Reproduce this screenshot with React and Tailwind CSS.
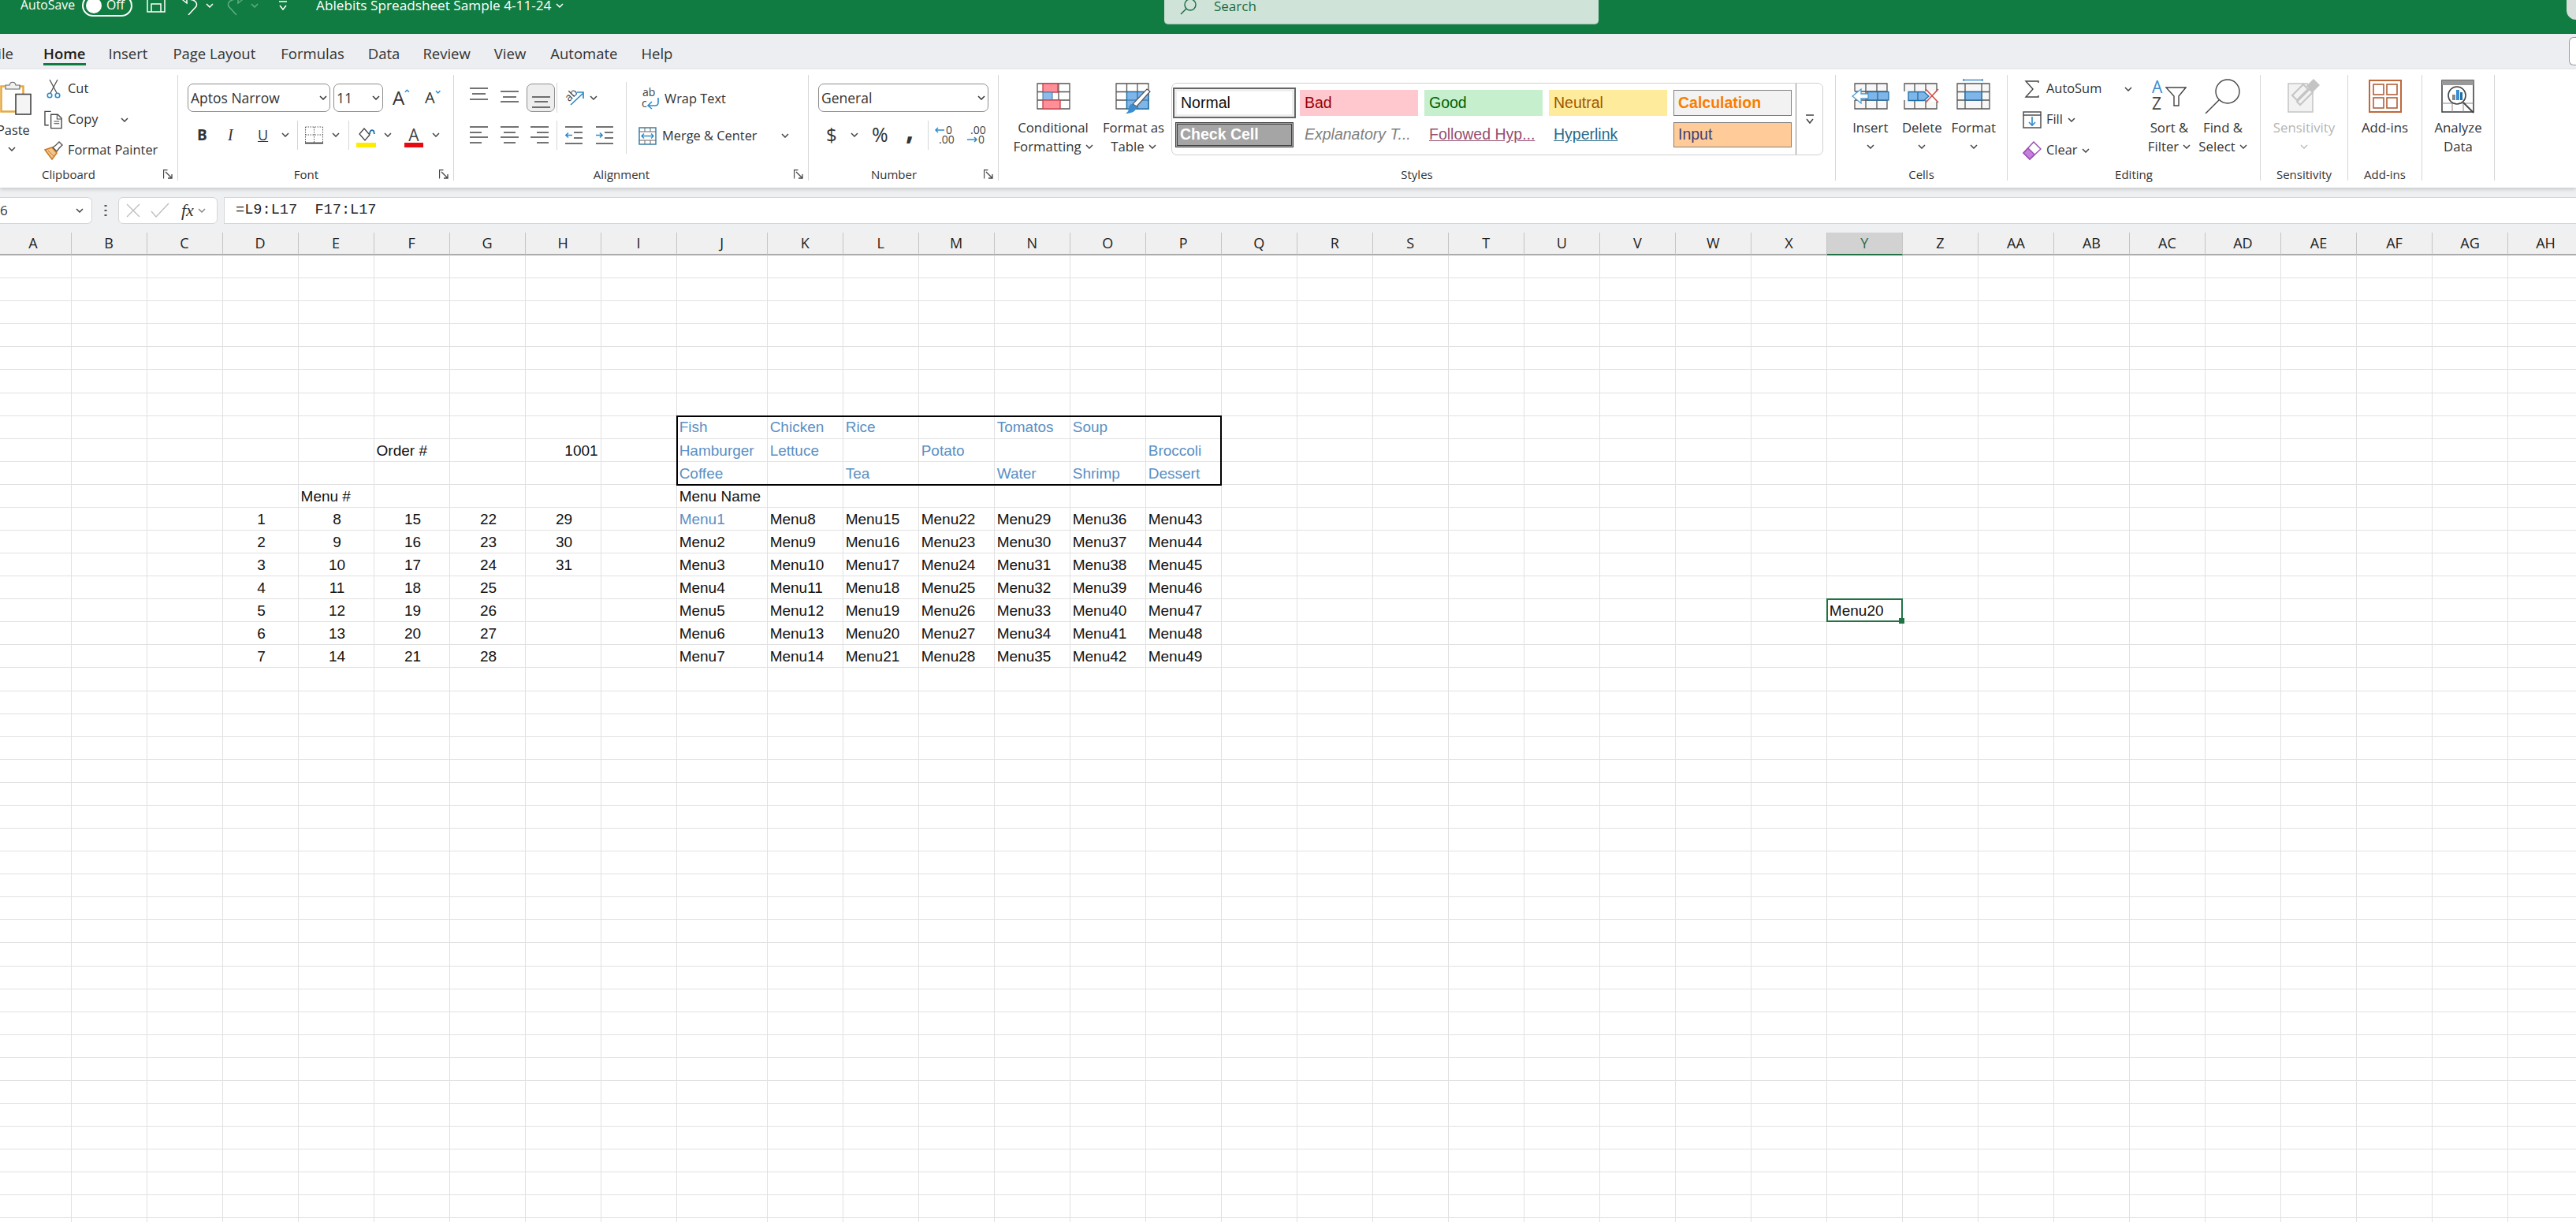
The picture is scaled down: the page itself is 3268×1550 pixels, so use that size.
import React from "react";

const COLS = "A B C D E F G H I J K L M N O P Q R S T U V W X Y Z AA AB AC AD AE AF AG AH".split(" ");
const ROW_COUNT = 43;

const BLUE = "text-[#5a8fc4]";
const cells = {
  F9: { text: "Order #" },
  H9: { text: "1001", className: "justify-end pr-[3px]" },
  J8: { text: "Fish", className: BLUE },
  K8: { text: "Chicken", className: BLUE },
  L8: { text: "Rice", className: BLUE },
  N8: { text: "Tomatos", className: BLUE },
  O8: { text: "Soup", className: BLUE },
  J9: { text: "Hamburger", className: BLUE },
  K9: { text: "Lettuce", className: BLUE },
  M9: { text: "Potato", className: BLUE },
  P9: { text: "Broccoli", className: BLUE },
  J10: { text: "Coffee", className: BLUE },
  L10: { text: "Tea", className: BLUE },
  N10: { text: "Water", className: BLUE },
  O10: { text: "Shrimp", className: BLUE },
  P10: { text: "Dessert", className: BLUE },
  E11: { text: "Menu #" },
  J11: { text: "Menu Name" },
  Y16: { text: "Menu20" },
};

["D", "E", "F", "G", "H"].forEach((col, c) => {
  for (let i = 0; i < 7; i++) {
    const value = c * 7 + i + 1;
    if (value <= 31) cells[col + (12 + i)] = { text: String(value), className: "justify-center" };
  }
});
["J", "K", "L", "M", "N", "O", "P"].forEach((col, c) => {
  for (let i = 0; i < 7; i++) {
    cells[col + (12 + i)] = { text: "Menu" + (c * 7 + i + 1), className: c === 0 && i === 0 ? BLUE : "" };
  }
});

function Chev({ className = "", color = "#444" }) {
  return (
    <svg width="10" height="6" viewBox="0 0 10 6" className={"shrink-0 " + className}>
      <path d="M1 1l4 4 4-4" fill="none" stroke={color} strokeWidth="1.5" />
    </svg>
  );
}

function Sep({ className = "" }) {
  return <div className={"w-px shrink-0 bg-[#d6d6d6] " + className} />;
}

function Launcher() {
  return (
    <svg width="12" height="12" viewBox="0 0 12 12" className="ml-auto mr-[6px] shrink-0">
      <path d="M.5 11.5V.5h5M.5 11.5h0M3 3l8 8M11 6v5H6" fill="none" stroke="#444" strokeWidth="1.3" />
    </svg>
  );
}

function Group({ width, label, launcher, children }) {
  return (
    <div className={"flex h-[134px] shrink-0 flex-col border-r border-[#d6d6d6] " + width}>
      <div className="h-[120px]">{children}</div>
      <div className="flex h-[16px] items-center text-[15px] text-[#333]">
        <span className="flex-1 whitespace-nowrap text-center">{label}</span>
        {launcher && <div className="flex w-[24px]"><Launcher /></div>}
      </div>
    </div>
  );
}

function LargeButton({ icon, lines, chev, tone = "text-[#333]", className = "", chevOnLine }) {
  return (
    <div className={"flex shrink-0 flex-col items-center text-[16.8px] " + tone + " " + className}>
      <div className="flex h-[55px] w-full justify-center">{icon}</div>
      {lines.map((line, i) => (
        <div key={line} className="flex h-[24px] items-center whitespace-nowrap">
          {line}
          {chevOnLine && i === lines.length - 1 && <Chev className="ml-[5px]" />}
        </div>
      ))}
      {chev && (
        <div className="flex h-[24px] items-center">
          <Chev color={chev} />
        </div>
      )}
    </div>
  );
}

const Line = ({ y, x1, x2 }) => <path d={`M${x1} ${y}H${x2}`} stroke="#444" strokeWidth="1.5" />;

function AlignIcon({ lines }) {
  return (
    <svg width="23" height="36" viewBox="0 0 23 36" className="shrink-0">
      {lines.map(([y, x1, x2]) => (
        <Line key={y} y={y} x1={x1} x2={x2} />
      ))}
    </svg>
  );
}

const PasteIcon = (
  <svg width="41" height="46" viewBox="0 0 41 46" className="mt-[7px] shrink-0">
    <path d="M6 7.5H1.5v32h28V7.5H25" fill="#fff" stroke="#e8a83c" strokeWidth="2.5" />
    <path d="M7 11V6h5c1-5 7-5 8 0h5v5z" fill="#f1f1f1" stroke="#666" strokeWidth="1.2" />
    <rect x="20" y="17.5" width="19" height="25.5" fill="#f5f5f5" stroke="#444" strokeWidth="1.6" />
  </svg>
);

const ScissorsIcon = (
  <svg width="18" height="24" viewBox="0 0 18 24">
    <path d="M4 0l9 17M14 0L5 17" fill="none" stroke="#555" strokeWidth="1.3" />
    <circle cx="4" cy="20" r="2.8" fill="none" stroke="#2e8bcb" strokeWidth="1.6" />
    <circle cx="14" cy="20" r="2.8" fill="none" stroke="#2e8bcb" strokeWidth="1.6" />
  </svg>
);

const CopyIcon = (
  <svg width="25" height="24" viewBox="0 0 25 24">
    <path d="M9 1H1v18h5" fill="none" stroke="#444" strokeWidth="1.4" />
    <path d="M9 5h9l5 5v13H9z" fill="#fff" stroke="#444" strokeWidth="1.4" />
    <path d="M17 5v6h6M13 14h7M13 17h7" fill="none" stroke="#444" strokeWidth="1.1" />
  </svg>
);

const PainterIcon = (
  <svg width="24" height="24" viewBox="0 0 24 24">
    <path d="M1 11l9-3 6 7-6 8z" fill="#f2c58c" stroke="#c97a22" strokeWidth="1.6" />
    <path d="M5 12l8 8" stroke="#c97a22" strokeWidth="1" />
    <path d="M11 8l4-3 4-4 4 4-4 4-3 4z" fill="#fff" stroke="#555" strokeWidth="1.4" />
  </svg>
);

const BorderIcon = (
  <svg width="23" height="23" viewBox="0 0 23 23">
    <path d="M.5 1h22M.5 1v20M22.5 1v20M11.5 1v20M.5 11h22" fill="none" stroke="#555" strokeWidth="1" strokeDasharray="1.5 1.5" />
    <path d="M0 21.5h23" stroke="#222" strokeWidth="1.6" />
  </svg>
);

const FillIcon = (
  <svg width="25" height="26" viewBox="0 0 25 26">
    <path d="M10 2l7 8-6 7-7-8z" fill="#fff" stroke="#444" strokeWidth="1.3" />
    <path d="M17 9c0-4 2-6 5-4l1 4" fill="none" stroke="#1c6fa8" strokeWidth="1.8" />
    <rect x="0" y="20" width="25" height="6" fill="#ffeb00" />
  </svg>
);

const FontColorIcon = (
  <div className="flex h-[26px] w-[24px] flex-col items-center">
    <span className="h-[20px] text-[21px] leading-[20px] text-[#444]">A</span>
    <div className="h-[6px] w-[24px] bg-[#e60b12]" />
  </div>
);

const OrientIcon = (
  <svg width="26" height="36" viewBox="0 0 26 36" className="shrink-0">
    <text x="10" y="19" textAnchor="middle" transform="rotate(-45 10 15)" fontSize="14" fill="#444" fontFamily="Open Sans">ab</text>
    <path d="M9 27L25 12M17 11h8v8" fill="none" stroke="#2e8bcb" strokeWidth="1.7" />
  </svg>
);

const WrapIcon = (
  <svg width="24" height="30" viewBox="0 0 24 30" className="shrink-0">
    <text x="1" y="12" fontSize="14" fill="#444" fontFamily="Open Sans">ab</text>
    <text x="0" y="26" fontSize="14" fill="#444" fontFamily="Open Sans">c</text>
    <path d="M21 14v6c0 3-2 4-4 4H9M13 19l-5 5 5 4" fill="none" stroke="#2e8bcb" strokeWidth="1.6" />
  </svg>
);

const MergeIcon = (
  <svg width="23" height="23" viewBox="0 0 23 23" className="shrink-0">
    <rect x="1" y="1" width="21" height="21" fill="#fff" stroke="#3b7ea8" strokeWidth="1.5" />
    <path d="M1 6h21M1 17h21M8 1v5M15 1v5M8 17v5M15 17v5" stroke="#666" strokeWidth="1" />
    <path d="M4 11.5h15M7 8.5l-3 3 3 3M16 8.5l3 3-3 3" fill="none" stroke="#2e8bcb" strokeWidth="1.4" />
  </svg>
);

const IndentIcon = ({ flip }) => (
  <svg width="22" height="23" viewBox="0 0 22 23" className="shrink-0">
    <path d="M0 1h22M11 8h11M11 15h11M0 22h22" stroke="#444" strokeWidth="1.5" />
    <path d={flip ? "M0 11.5h8M5 8.5l3 3-3 3" : "M1 11.5h8M4 8.5l-3 3 3 3"} fill="none" stroke="#2e8bcb" strokeWidth="1.6" />
  </svg>
);

const DecimalIcon = ({ less }) => (
  <svg width="25" height="24" viewBox="0 0 25 24" className="shrink-0">
    <text x={less ? 14 : 5} y="11" fontSize="14" fill="#444" fontFamily="Open Sans">{less ? "0" : ".00"}</text>
    <text x={less ? 5 : 15} y="23" fontSize="14" fill="#444" fontFamily="Open Sans">{less ? ".00" : "0"}</text>
    <path d={less ? "M1 6h11M4 3L1 6l3 3" : "M1 18h12M10 15l3 3-3 3"} fill="none" stroke="#2e8bcb" strokeWidth="1.5" />
  </svg>
);

const GridLines = () => (
  <path d="M1 1h41v32H1zM1 11.5h41M1 22h41M14.5 1v32M28 1v32" fill="none" stroke="#555" strokeWidth="1.3" />
);

const CondFormatIcon = (
  <svg width="43" height="35" viewBox="0 0 43 35" className="mt-[10px]">
    <GridLines />
    <rect x="8" y="1" width="19" height="11" fill="#ff8f98" stroke="#c9414a" strokeWidth="1.3" />
    <rect x="8" y="12" width="12" height="10" fill="#8dbcea" stroke="#3b7ea8" strokeWidth="1" />
    <rect x="8" y="22" width="22" height="11" fill="#ff8f98" stroke="#c9414a" strokeWidth="1.3" />
  </svg>
);

const TableIcon = (
  <svg width="46" height="42" viewBox="0 0 46 42" className="mt-[10px]">
    <GridLines />
    <rect x="14.5" y="11.5" width="27.5" height="21.5" fill="#7fb5e8" stroke="#1c6fa8" strokeWidth="1.3" />
    <path d="M14.5 22h27.5M28 11.5V33" stroke="#1c6fa8" strokeWidth="1.2" />
    <path d="M44 11L27 30l-5-3L40 8z" fill="#fff" stroke="#555" strokeWidth="1.2" />
    <path d="M21 27l6 4c-1 6-8 8-14 8 3-2 4-4 4-7 0-3 2-5 4-5z" fill="#3c8dcf" />
  </svg>
);

const InsertIcon = (
  <svg width="48" height="34" viewBox="0 0 48 34" className="mt-[10px]">
    <path d="M4 11V1h41v32H4V22M18 1v32M32 1v32M4 11h41M4 22h41" fill="#f7f7f7" stroke="#555" strokeWidth="1.3" />
    <rect x="20" y="11.5" width="27" height="10.5" fill="#7fb5e8" stroke="#1c6fa8" strokeWidth="1.3" />
    <path d="M33 11.5V22" stroke="#1c6fa8" strokeWidth="1.3" />
    <path d="M21 14h-9v-6L1 17l11 9v-6h9z" fill="#fff" stroke="#4a9bd4" strokeWidth="1.3" />
  </svg>
);

const DeleteIcon = (
  <svg width="46" height="34" viewBox="0 0 46 34" className="mt-[10px]">
    <path d="M1 11V1h41v10M1 22v11h41V24M14 1v10M28 1v10M14 22v11M28 22v11" fill="#f7f7f7" stroke="#555" strokeWidth="1.3" />
    <path d="M6 11.5h20l6 5.5-6 5.5H6z" fill="#7fb5e8" stroke="#1c6fa8" strokeWidth="1.3" />
    <path d="M18 11.5v11" stroke="#1c6fa8" strokeWidth="1.3" />
    <path d="M28 8l16 17M44 8L28 25" stroke="#d04f4f" strokeWidth="1.7" />
  </svg>
);

const FormatCellsIcon = (
  <svg width="43" height="41" viewBox="0 0 43 41" className="mt-[3px]">
    <path d="M9 2v3M33 2v3M9 3.5h24" fill="none" stroke="#3c8dcf" strokeWidth="1.4" />
    <g transform="translate(0 7)">
      <path d="M1 1h41v32H1zM1 11.5h41M1 22h41M11 1v32M32 1v32" fill="#f7f7f7" stroke="#555" strokeWidth="1.3" />
      <rect x="11" y="11.5" width="21" height="10.5" fill="#7fb5e8" stroke="#1c6fa8" strokeWidth="1.3" />
    </g>
  </svg>
);

const SumIcon = (
  <svg width="20" height="22" viewBox="0 0 20 22">
    <path d="M18 3V1H2l9 10-9 10h16v-2" fill="none" stroke="#444" strokeWidth="1.4" />
  </svg>
);

const DownFillIcon = (
  <svg width="24" height="22" viewBox="0 0 24 22">
    <rect x="1" y="1" width="22" height="20" fill="#fff" stroke="#444" strokeWidth="1.4" />
    <path d="M1 5h22" stroke="#444" strokeWidth="1.4" />
    <path d="M12 7v11M8 14l4 4 4-4" fill="none" stroke="#2e8bcb" strokeWidth="1.6" />
  </svg>
);

const EraserIcon = (
  <svg width="24" height="24" viewBox="0 0 24 24">
    <path d="M14 1l9 9-14 13-8-8z" fill="#fff" stroke="#9c4fb3" strokeWidth="1.5" />
    <path d="M7 9l8 8-6 6-8-8z" fill="#c77fdc" stroke="#9c4fb3" strokeWidth="1.5" />
  </svg>
);

const SortIcon = (
  <svg width="44" height="41" viewBox="0 0 44 41" className="mt-[6px]">
    <text x="0" y="17" fontSize="21" fill="#3c8dcf" fontFamily="Open Sans">A</text>
    <text x="0" y="38" fontSize="21" fill="#444" fontFamily="Open Sans">Z</text>
    <path d="M18 10h25L34 21v12h-6V21z" fill="#fff" stroke="#444" strokeWidth="1.4" />
  </svg>
);

const FindIcon = (
  <svg width="46" height="44" viewBox="0 0 46 44" className="mt-[5px]">
    <circle cx="29" cy="16" r="15" fill="#fff" stroke="#444" strokeWidth="1.4" />
    <path d="M18 27L1 44" stroke="#444" strokeWidth="1.4" />
  </svg>
);

const SensitivityIcon = (
  <svg width="42" height="44" viewBox="0 0 42 44" className="mt-[4px]">
    <path d="M1 7h24l7 8v28H1z" fill="#f2f2f2" stroke="#c4c4c4" strokeWidth="1.5" />
    <path d="M6 22L20 8l6 6-14 14zM12 30l16-16 4 4-16 16z" fill="#f2f2f2" stroke="#c4c4c4" strokeWidth="2" />
    <path d="M24 10l9-9 8 8-9 9z" fill="#c4c4c4" />
  </svg>
);

const AddInsIcon = (
  <svg width="42" height="42" viewBox="0 0 42 42" className="mt-[6px]">
    <rect x="1" y="1" width="40" height="40" fill="#fff" stroke="#c0683a" strokeWidth="2" />
    <rect x="6" y="6" width="13" height="13" fill="#fff" stroke="#b0603a" strokeWidth="1.6" />
    <rect x="23" y="6" width="13" height="13" fill="#fff" stroke="#b0603a" strokeWidth="1.6" />
    <rect x="6" y="23" width="13" height="13" fill="#fff" stroke="#b0603a" strokeWidth="1.6" />
    <rect x="23" y="23" width="13" height="13" fill="#fff" stroke="#b0603a" strokeWidth="1.6" />
  </svg>
);

const AnalyzeIcon = (
  <svg width="43" height="43" viewBox="0 0 43 43" className="mt-[6px]">
    <rect x="1" y="1" width="40" height="40" fill="#fff" stroke="#444" strokeWidth="1.6" />
    <rect x="1" y="1" width="40" height="6" fill="#999" />
    <path d="M1 30h40M14 30v11M28 30v11" stroke="#888" strokeWidth="1" />
    <circle cx="20" cy="20" r="11" fill="#fff" stroke="#444" strokeWidth="1.6" />
    <rect x="14" y="19" width="4" height="7" fill="#888" />
    <rect x="19" y="13" width="4" height="13" fill="#3c8dcf" />
    <rect x="24" y="16" width="3" height="10" fill="#1c6fa8" />
    <path d="M28 29l13 13" stroke="#444" strokeWidth="1.8" />
  </svg>
);

function SmallRow({ icon, iconWidth = "w-[24px]", children }) {
  return (
    <div className="flex h-[39px] items-center whitespace-nowrap text-[16.4px] text-[#333]">
      <div className={"flex shrink-0 justify-center " + iconWidth}>{icon}</div>
      {children}
    </div>
  );
}

function SelectBox({ width, text }) {
  return (
    <div className={"flex h-[36px] shrink-0 items-center rounded-[7px] border border-[#8f8f8f] pl-[3px] text-[17.5px] text-[#333] " + width}>
      <span>{text}</span>
      <Chev className="ml-auto mr-[3px]" color="#333" />
    </div>
  );
}

function StyleCell({ className, children }) {
  return <div className={"flex items-center whitespace-nowrap font-['Liberation_Sans'] text-[19.5px] " + className}>{children}</div>;
}

function TitleBar() {
  return (
    <div className="flex h-[43px] items-start overflow-hidden bg-[#107c41] text-white">
      <div className="flex h-[14px] w-[1477px] shrink-0 items-center">
        <span className="ml-[26px] text-[15.8px]">AutoSave</span>
        <div className="ml-[9px] flex h-[28px] w-[64px] items-center rounded-full border-2 border-white pl-[3px]">
          <div className="h-[20px] w-[20px] rounded-full bg-white" />
          <span className="ml-[6px] text-[15.8px]">Off</span>
        </div>
        <svg width="24" height="28" viewBox="0 0 24 28" className="ml-[18px] mt-[-6px]">
          <path d="M1 0v25h22V0M6 25V15h12v10M6 0v7h12V0" fill="none" stroke="#fff" strokeWidth="1.5" />
        </svg>
        <svg width="22" height="24" viewBox="0 0 22 24" className="ml-[20px]">
          <path d="M2 5l5 4V2zM7 4c10 0 14 4 12 9L9 24" fill="none" stroke="#fff" strokeWidth="1.5" />
        </svg>
        <Chev className="ml-[9px]" color="#fff" />
        <svg width="22" height="24" viewBox="0 0 22 24" className="ml-[16px]">
          <path d="M20 5l-5 4V2zM15 4C5 4 1 8 3 13l10 11" fill="none" stroke="#5fae85" strokeWidth="1.5" />
        </svg>
        <Chev className="ml-[9px]" color="#5fae85" />
        <svg width="12" height="14" viewBox="0 0 12 14" className="ml-[25px]">
          <path d="M1 2h10M2 7l4 5 4-5" fill="none" stroke="#fff" strokeWidth="1.5" />
        </svg>
        <span className="ml-[36px] whitespace-nowrap text-[17.2px]">Ablebits Spreadsheet Sample 4-11-24</span>
        <Chev className="ml-[6px]" color="#fff" />
      </div>
      <div className="flex h-[31px] w-[551px] shrink-0 items-start rounded-b-[5px] border-b border-[#9dbfad] bg-[#cfe3d8] text-[#1d6b43]">
        <svg width="22" height="22" viewBox="0 0 22 22" className="ml-[20px] mt-[-3px]">
          <circle cx="13" cy="9" r="7" fill="none" stroke="#1d6b43" strokeWidth="1.4" />
          <path d="M8 14l-7 7" stroke="#1d6b43" strokeWidth="1.4" />
        </svg>
        <span className="ml-[21px] text-[17px] leading-[16px]">Search</span>
      </div>
      <div className="ml-auto h-[25px] w-[12px] rounded-bl-full bg-[#d9dfdc]" />
    </div>
  );
}

function Tabs() {
  const tabs = [
    ["Insert", "ml-[29px]"],
    ["Page Layout", "ml-[32px]"],
    ["Formulas", "ml-[32px]"],
    ["Data", "ml-[30px]"],
    ["Review", "ml-[29px]"],
    ["View", "ml-[30px]"],
    ["Automate", "ml-[31px]"],
    ["Help", "ml-[30px]"],
  ];
  return (
    <div className="flex h-[45px] items-start bg-[#eceef1] text-[18.5px] text-[#333]">
      <span className="flex h-[40px] w-[17px] shrink-0 justify-end pt-[10px] leading-[30px]">File</span>
      <span className="ml-[38px] h-[40px] border-b-[3px] border-[#107c41] pt-[10px] font-semibold leading-[30px] text-[#1d1d1d]">Home</span>
      {tabs.map(([name, margin]) => (
        <span key={name} className={"h-[40px] pt-[10px] leading-[30px] " + margin}>{name}</span>
      ))}
      <div className="ml-auto mt-[4px] h-[36px] w-[9px] rounded-l-[6px] border border-r-0 border-[#9a9a9a] bg-white" />
    </div>
  );
}

function Ribbon() {
  return (
    <div className="relative z-10 flex h-[150px] items-start bg-white pt-[7px] text-[#333] shadow-[0_2px_5px_rgba(0,0,0,0.18)]">
      <div className="flex h-[134px] w-[226px] shrink-0 flex-col border-r border-[#d6d6d6]">
        <div className="flex h-[120px]">
          <div className="flex w-[56px] shrink-0 flex-col text-[16.4px]">
            {PasteIcon}
            <span className="ml-[-4px] mt-[6px] leading-[22px]">Paste</span>
            <Chev className="ml-[10px] mt-[10px]" />
          </div>
          <div className="mt-[-2px] flex flex-col">
            <SmallRow icon={ScissorsIcon}><span className="ml-[6px]">Cut</span></SmallRow>
            <SmallRow icon={CopyIcon}><span className="ml-[6px] w-[67px]">Copy</span><Chev /></SmallRow>
            <SmallRow icon={PainterIcon}><span className="ml-[6px]">Format Painter</span></SmallRow>
          </div>
        </div>
        <div className="flex h-[16px] items-center text-[15px]">
          <span className="ml-[53px]">Clipboard</span>
          <Launcher />
        </div>
      </div>

      <Group width="w-[350px]" label="Font" launcher>
        <div className="flex items-center pl-[12px] pt-[11px]">
          <SelectBox width="w-[181px]" text="Aptos Narrow" />
          <div className="ml-[4px]"><SelectBox width="w-[63px]" text="11" /></div>
          <span className="ml-[12px] flex w-[22px] text-[24px] leading-none">A<svg width="8" height="6" viewBox="0 0 8 6"><path d="M1 5l3-3 3 3" fill="none" stroke="#2e8bcb" strokeWidth="1.6" /></svg></span>
          <span className="ml-[19px] flex w-[20px] text-[20px] leading-none">A<svg width="8" height="6" viewBox="0 0 8 6"><path d="M1 1l3 3 3-3" fill="none" stroke="#2e8bcb" strokeWidth="1.6" /></svg></span>
        </div>
        <div className="mt-[9px] flex h-[40px] items-center">
          <span className="ml-[24px] w-[12px] text-[19px] font-bold">B</span>
          <span className="ml-[27px] w-[12px] font-['Liberation_Serif'] text-[20px] italic">I</span>
          <span className="ml-[26px] w-[14px] text-[18px] underline">U</span>
          <Chev className="ml-[16px]" />
          <Sep className="ml-[10px] h-[37px]" />
          <div className="ml-[9px] w-[23px]">{BorderIcon}</div>
          <Chev className="ml-[11px]" />
          <Sep className="ml-[11px] h-[37px]" />
          <div className="ml-[9px] mt-[6px] w-[25px]">{FillIcon}</div>
          <Chev className="ml-[10px]" />
          <div className="ml-[16px] mt-[6px]">{FontColorIcon}</div>
          <Chev className="ml-[11px]" />
        </div>
      </Group>

      <Group width="w-[450px]" label="Alignment" launcher>
        <div className="flex items-start">
          <div className="w-[218px] shrink-0 pt-[11px]">
            <div className="flex h-[36px] items-center">
              <div className="ml-[20px]"><AlignIcon lines={[[6, 0, 23], [13, 3, 20], [20, 0, 23]]} /></div>
              <div className="ml-[16px]"><AlignIcon lines={[[10, 0, 23], [17, 3, 20], [23, 0, 23]]} /></div>
              <div className="ml-[10px] flex h-[36px] w-[36px] justify-center rounded-[7px] border border-[#8f8f8f] bg-[#eeeeee]">
                <AlignIcon lines={[[16, 0, 23], [22, 3, 20], [29, 0, 23]]} />
              </div>
              <Sep className="ml-[2px] h-[38px]" />
              <div className="ml-[8px]">{OrientIcon}</div>
              <Chev className="ml-[7px]" />
            </div>
            <div className="mt-[9px] flex h-[40px] items-center">
              <div className="ml-[20px]"><AlignIcon lines={[[8, 0, 23], [15, 0, 15], [21, 0, 23], [28, 0, 15]]} /></div>
              <div className="ml-[16px]"><AlignIcon lines={[[8, 0, 23], [15, 4, 19], [21, 0, 23], [28, 4, 19]]} /></div>
              <div className="ml-[15px]"><AlignIcon lines={[[8, 0, 23], [15, 8, 23], [21, 0, 23], [28, 8, 23]]} /></div>
              <Sep className="ml-[10px] h-[37px]" />
              <div className="ml-[10px]"><IndentIcon /></div>
              <div className="ml-[17px]"><IndentIcon flip /></div>
            </div>
          </div>
          <Sep className="mt-[9px] h-[91px]" />
          <div className="flex flex-col pt-[12px] text-[16.4px]">
            <div className="flex h-[36px] items-center whitespace-nowrap">
              <div className="ml-[19px]">{WrapIcon}</div>
              <span className="ml-[5px]">Wrap Text</span>
            </div>
            <div className="mt-[9px] flex h-[40px] items-center whitespace-nowrap">
              <div className="ml-[15px]">{MergeIcon}</div>
              <span className="ml-[7px] w-[151px]">Merge &amp; Center</span>
              <Chev />
            </div>
          </div>
        </div>
      </Group>

      <Group width="w-[241px]" label="Number" launcher>
        <div className="pl-[12px] pt-[11px]">
          <SelectBox width="w-[216px]" text="General" />
        </div>
        <div className="mt-[9px] flex h-[40px] items-center">
          <span className="ml-[22px] w-[12px] text-[24px]">$</span>
          <Chev className="ml-[19px]" />
          <span className="ml-[17px] w-[22px] text-[25px]">%</span>
          <span className="ml-[21px] h-[32px] w-[14px] text-[36px] font-bold leading-[18px]">,</span>
          <Sep className="ml-[14px] h-[37px]" />
          <div className="ml-[8px]"><DecimalIcon less /></div>
          <div className="ml-[15px]"><DecimalIcon /></div>
        </div>
      </Group>

      <Group width="w-[1062px]" label="Styles">
        <div className="flex items-start">
          <LargeButton className="w-[138px]" icon={CondFormatIcon} lines={["Conditional", "Formatting"]} chevOnLine />
          <LargeButton className="w-[66px]" icon={TableIcon} lines={["Format as", "Table"]} chevOnLine />
          <div className="ml-[15px] mt-[10px] flex h-[92px] w-[827px] rounded-[7px] border border-[#d0d0d0]">
            <div className="grid grid-cols-[repeat(5,150px)] grid-rows-[33px_32px] gap-x-[8px] gap-y-[8px] pl-[4px] pt-[8px]">
              <StyleCell className="m-[-3px] border-2 border-[#666] bg-white pl-[8px] text-[#111] shadow-[inset_0_0_0_3px_#eeeeee]">Normal</StyleCell>
              <StyleCell className="bg-[#ffc7ce] px-[6px] text-[#9c0006]">Bad</StyleCell>
              <StyleCell className="bg-[#c6efce] px-[6px] text-[#006100]">Good</StyleCell>
              <StyleCell className="bg-[#ffeb9c] px-[6px] text-[#9c5700]">Neutral</StyleCell>
              <StyleCell className="border border-[#7f7f7f] bg-[#f2f2f2] px-[5px] font-bold text-[#fa7d00]">Calculation</StyleCell>
              <StyleCell className="border-[3px] border-double border-[#3f3f3f] bg-[#a5a5a5] px-[3px] font-bold text-white">Check Cell</StyleCell>
              <StyleCell className="px-[6px] italic text-[#7f7f7f]">Explanatory T...</StyleCell>
              <StyleCell className="px-[6px] text-[#954f72] underline">Followed Hyp...</StyleCell>
              <StyleCell className="px-[6px] text-[#2a6a8a] underline">Hyperlink</StyleCell>
              <StyleCell className="border border-[#7f7f7f] bg-[#ffcc99] px-[5px] text-[#3f3f76]">Input</StyleCell>
            </div>
            <div className="ml-[5px] flex flex-1 items-center justify-center rounded-r-[7px] border-l border-[#8a8a8a]">
              <svg width="12" height="14" viewBox="0 0 12 14">
                <path d="M1 2h10M2 7l4 5 4-5" fill="none" stroke="#444" strokeWidth="1.5" />
              </svg>
            </div>
          </div>
        </div>
      </Group>

      <Group width="w-[218px]" label="Cells">
        <div className="ml-[11px] flex">
          <LargeButton className="w-[65.5px]" icon={InsertIcon} lines={["Insert"]} chev="#444" />
          <LargeButton className="w-[65.5px]" icon={DeleteIcon} lines={["Delete"]} chev="#444" />
          <LargeButton className="w-[65.5px]" icon={FormatCellsIcon} lines={["Format"]} chev="#444" />
        </div>
      </Group>

      <Group width="w-[321px]" label="Editing">
        <div className="ml-[19px] flex">
          <div className="mt-[-2px] flex w-[152px] shrink-0 flex-col">
            <SmallRow icon={SumIcon}><span className="ml-[6px] w-[99px]">AutoSum</span><Chev /></SmallRow>
            <SmallRow icon={DownFillIcon}><span className="ml-[6px]">Fill</span><Chev className="ml-[6px]" /></SmallRow>
            <SmallRow icon={EraserIcon}><span className="ml-[6px]">Clear</span><Chev className="ml-[6px]" /></SmallRow>
          </div>
          <LargeButton className="w-[68px]" icon={SortIcon} lines={["Sort &", "Filter"]} chevOnLine />
          <LargeButton className="w-[68px]" icon={FindIcon} lines={["Find &", "Select"]} chevOnLine />
        </div>
      </Group>

      <Group width="w-[111px]" label="Sensitivity">
        <LargeButton icon={SensitivityIcon} lines={["Sensitivity"]} chev="#bdbdbd" tone="text-[#b5b5b5]" />
      </Group>

      <Group width="w-[94px]" label="Add-ins">
        <LargeButton icon={AddInsIcon} lines={["Add-ins"]} />
      </Group>

      <Group width="w-[92px]" label="">
        <LargeButton icon={AnalyzeIcon} lines={["Analyze", "Data"]} />
      </Group>
    </div>
  );
}

function FormulaBar() {
  return (
    <div className="flex h-[57px] flex-col bg-[#eef0f2] pt-[12px]">
      <div className="flex h-[34px] items-stretch">
        <div className="flex w-[117px] items-center rounded-r-[6px] border border-l-0 border-[#d6d6d6] bg-white text-[17px] text-[#333]">
          <span>6</span>
          <Chev className="ml-auto mr-[10px]" color="#444" />
        </div>
        <div className="flex w-[33px] items-center justify-center">
          <svg width="4" height="16" viewBox="0 0 4 16"><path d="M2 1v2M2 7v2M2 13v2" stroke="#555" strokeWidth="3" /></svg>
        </div>
        <div className="flex w-[126px] items-center rounded-[6px] border border-[#d6d6d6] bg-white">
          <svg width="20" height="20" viewBox="0 0 20 20" className="ml-[8px]"><path d="M2 2l16 16M18 2L2 18" stroke="#bdbdbd" strokeWidth="1.3" /></svg>
          <svg width="24" height="20" viewBox="0 0 24 20" className="ml-[12px]"><path d="M1 11l6 7L23 1" fill="none" stroke="#bdbdbd" strokeWidth="1.3" /></svg>
          <span className="ml-[15px] font-['Liberation_Serif'] text-[22px] italic leading-none text-[#333]">fx</span>
          <Chev className="ml-[5px]" color="#888" />
        </div>
        <div className="ml-[8px] flex flex-1 items-center border-y border-l border-[#d6d6d6] bg-white pl-[14px] font-['Liberation_Mono'] text-[18.6px] text-[#222]">
          <span className="whitespace-pre">=L9:L17  F17:L17</span>
        </div>
      </div>
    </div>
  );
}

function Sheet() {
  const rows = Array.from({ length: ROW_COUNT }, (_, i) => i + 1);
  return (
    <div className="ml-[-5.5px] grid w-max grid-cols-[repeat(9,96.03px)_115px_repeat(24,96.03px)] auto-rows-[29.09px] font-['Liberation_Sans'] text-[19px] text-[#111]">
      {COLS.map((col) => (
        <div
          key={col}
          className={
            "flex h-[29.09px] items-center justify-center border-b-2 border-r font-['Open_Sans'] text-[18px] " +
            (col === "Y"
              ? "border-b-[#217346] border-r-[#c4c4c4] bg-[#d2d2d2] text-[#2f6b4c]"
              : "border-b-[#ababab] border-r-[#c4c4c4] bg-[#f0f0f0] text-[#222]")
          }
        >
          {col}
        </div>
      ))}
      {rows.map((row) =>
        COLS.map((col) => {
          const id = col + row;
          const cell = cells[id];
          return (
            <div
              key={id}
              className={"relative flex items-center whitespace-nowrap border-b border-r border-[#e1e1e1] pl-[3px] pt-[2px] " + (cell?.className || "")}
            >
              {cell?.text}
              {id === "J8" && <div className="absolute left-[-1px] top-[-1px] z-10 h-[89px] w-[692px] border-[2.5px] border-black" />}
              {id === "Y16" && (
                <div className="absolute inset-[-1px] z-10 border-2 border-[#217346]">
                  <div className="absolute bottom-[-4px] right-[-4px] h-[7px] w-[7px] bg-[#217346]" />
                </div>
              )}
            </div>
          );
        })
      )}
    </div>
  );
}

export default function App() {
  return (
    <div className="h-[1550px] w-[3268px] overflow-hidden bg-white font-['Open_Sans',sans-serif]">
      <TitleBar />
      <Tabs />
      <Ribbon />
      <FormulaBar />
      <Sheet />
    </div>
  );
}
